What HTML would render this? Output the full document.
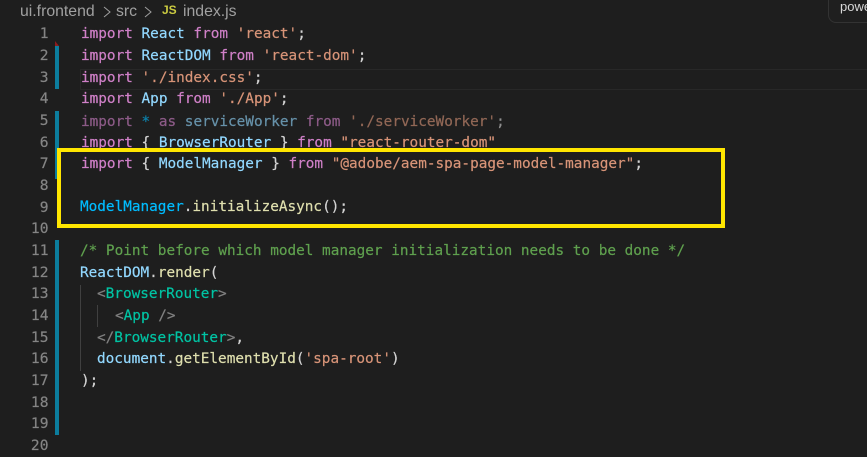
<!DOCTYPE html>
<html><head><meta charset="utf-8">
<style>
html,body{margin:0;padding:0;background:#1e1e1e}
#r{position:relative;width:867px;height:457px;overflow:hidden;background:#1e1e1e;font-family:"DejaVu Sans Mono","Liberation Mono",monospace;font-size:14.36px;color:#d4d4d4;-webkit-text-stroke:.2px}
.l{position:absolute;left:81px;white-space:pre;height:22px;line-height:22px}
.n{position:absolute;left:0;width:48.5px;text-align:right;color:#858585;height:22px;line-height:22px;font-size:14.6px}
.b{position:absolute;left:55px;width:4px;background:#0c7d9d}
.k{color:#d080c8}.v{color:#92d8ff}.s{color:#d89478}.c{color:#00bcff}.f{color:#dfdfae}.g{color:#5fa04e}.t{color:#00c4a4}.d{color:#808080}
.dim{opacity:.62}
.crumb{position:absolute;top:2px;font-family:"Liberation Sans",sans-serif;font-size:15.8px;color:#a0a0a0;line-height:20px;white-space:pre;-webkit-text-stroke:0}
</style></head><body><div id="r">
<div class="crumb" style="left:20px">ui.frontend</div>
<svg style="position:absolute;left:0;top:0" width="160" height="24"><path d="M104 7l6 5-6 5M145 7l6 5-6 5" fill="none" stroke="#a0a0a0" stroke-width="1"/></svg>
<div class="crumb" style="left:116px">src</div>
<div class="crumb" style="left:162px;top:0;color:#cbcb41;font-size:12px;font-weight:bold">JS</div>
<div class="crumb" style="left:183px">index.js</div>
<div style="position:absolute;left:828px;top:-10px;width:60px;height:33px;box-sizing:border-box;border:1px solid #333;border-radius:8px;background:#1f1f1f"></div>
<div style="position:absolute;left:840px;top:-1px;font-family:'Liberation Sans',sans-serif;font-size:13px;line-height:16px;color:#d8d8d8;white-space:pre;-webkit-text-stroke:0">powe</div>
<div class="b" style="top:46px;height:43px"></div>
<div class="b" style="top:111px;height:68px"></div>
<div class="b" style="top:240px;height:195px"></div>
<svg style="position:absolute;left:55px;top:41px" width="5" height="5"><path d="M0 0L4 5H0Z" fill="#8e1b1b"/></svg>
<div style="position:absolute;left:80px;top:69px;right:0;height:19px;border:1px solid #282828;border-right:0"></div>
<div style="position:absolute;left:80px;top:285px;width:1px;height:86px;background:#404040"></div>
<div style="position:absolute;left:97px;top:305px;width:1px;height:22px;background:#404040"></div>
<div class="n" style="top:23px">1</div><div class="n" style="top:45px">2</div><div class="n" style="top:67px">3</div><div class="n" style="top:88px">4</div><div class="n" style="top:110px">5</div><div class="n" style="top:132px">6</div><div class="n" style="top:153px">7</div><div class="n" style="top:175px">8</div><div class="n" style="top:197px">9</div><div class="n" style="top:218px">10</div><div class="n" style="top:240px">11</div><div class="n" style="top:262px">12</div><div class="n" style="top:283px">13</div><div class="n" style="top:305px">14</div><div class="n" style="top:327px">15</div><div class="n" style="top:348px">16</div><div class="n" style="top:370px">17</div><div class="n" style="top:392px">18</div><div class="n" style="top:413px">19</div><div class="n" style="top:435px">20</div>
<div class="l" style="top:23px"><span class="k">import</span> <span class="v">React</span> <span class="k">from</span> <span class="s">'react'</span>;</div>
<div class="l" style="top:45px"><span class="k">import</span> <span class="v">ReactDOM</span> <span class="k">from</span> <span class="s">'react-dom'</span>;</div>
<div class="l" style="top:67px"><span class="k">import</span> <span class="s">'./index.css'</span>;</div>
<div class="l" style="top:88px"><span class="k">import</span> <span class="v">App</span> <span class="k">from</span> <span class="s">'./App'</span>;</div>
<div class="l dim" style="top:111px"><span class="k">import</span> <span class="c">*</span> <span class="k">as</span> <span class="v">serviceWorker</span> <span class="k">from</span> <span class="s">'./serviceWorker'</span>;</div>
<div class="l" style="top:132px"><span class="k">import</span> { <span class="v">BrowserRouter</span> } <span class="k">from</span> <span class="s">"react-router-dom"</span></div>
<div class="l" style="top:153px"><span class="k">import</span> { <span class="v">ModelManager</span> } <span class="k">from</span> <span class="s">"@adobe/aem-spa-page-model-manager"</span>;</div>
<div class="l" style="top:196px;left:80px"><span class="c">ModelManager</span>.<span class="f">initializeAsync</span>();</div>
<div class="l" style="top:240px;left:80px"><span class="g">/* Point before which model manager initialization needs to be done */</span></div>
<div class="l" style="top:262px;left:80px"><span class="v">ReactDOM</span>.<span class="f">render</span>(</div>
<div class="l" style="top:283px;left:97px"><span class="d">&lt;</span><span class="t">BrowserRouter</span><span class="d">&gt;</span></div>
<div class="l" style="top:305px;left:115px"><span class="d">&lt;</span><span class="t">App</span> <span class="d">/&gt;</span></div>
<div class="l" style="top:327px;left:97px"><span class="d">&lt;/</span><span class="t">BrowserRouter</span><span class="d">&gt;</span>,</div>
<div class="l" style="top:348px;left:97px"><span class="v">document</span>.<span class="f">getElementById</span>(<span class="s">'spa-root'</span>)</div>
<div class="l" style="top:370px;left:81px">);</div>
<div style="position:absolute;left:57px;top:148px;width:668px;height:80px;box-sizing:border-box;border:4px solid #ffe600"></div>
</div></body></html>
